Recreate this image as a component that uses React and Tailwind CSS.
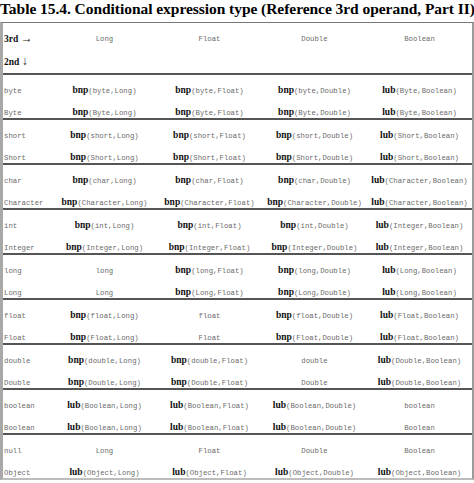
const groups = [
  [
    ["byte", "bnp(byte,Long)", "bnp(byte,Float)", "bnp(byte,Double)", "lub(Byte,Boolean)"],
    ["Byte", "bnp(Byte,Long)", "bnp(Byte,Float)", "bnp(Byte,Double)", "lub(Byte,Boolean)"],
  ],
  [
    ["short", "bnp(short,Long)", "bnp(short,Float)", "bnp(short,Double)", "lub(Short,Boolean)"],
    ["Short", "bnp(Short,Long)", "bnp(Short,Float)", "bnp(Short,Double)", "lub(Short,Boolean)"],
  ],
  [
    ["char", "bnp(char,Long)", "bnp(char,Float)", "bnp(char,Double)", "lub(Character,Boolean)"],
    ["Character", "bnp(Character,Long)", "bnp(Character,Float)", "bnp(Character,Double)", "lub(Character,Boolean)"],
  ],
  [
    ["int", "bnp(int,Long)", "bnp(int,Float)", "bnp(int,Double)", "lub(Integer,Boolean)"],
    ["Integer", "bnp(Integer,Long)", "bnp(Integer,Float)", "bnp(Integer,Double)", "lub(Integer,Boolean)"],
  ],
  [
    ["long", "long", "bnp(long,Float)", "bnp(long,Double)", "lub(Long,Boolean)"],
    ["Long", "Long", "bnp(Long,Float)", "bnp(Long,Double)", "lub(Long,Boolean)"],
  ],
  [
    ["float", "bnp(float,Long)", "float", "bnp(float,Double)", "lub(Float,Boolean)"],
    ["Float", "bnp(Float,Long)", "Float", "bnp(Float,Double)", "lub(Float,Boolean)"],
  ],
  [
    ["double", "bnp(double,Long)", "bnp(double,Float)", "double", "lub(Double,Boolean)"],
    ["Double", "bnp(Double,Long)", "bnp(Double,Float)", "Double", "lub(Double,Boolean)"],
  ],
  [
    ["boolean", "lub(Boolean,Long)", "lub(Boolean,Float)", "lub(Boolean,Double)", "boolean"],
    ["Boolean", "lub(Boolean,Long)", "lub(Boolean,Float)", "lub(Boolean,Double)", "Boolean"],
  ],
  [
    ["null", "Long", "Float", "Double", "Boolean"],
    ["Object", "lub(Object,Long)", "lub(Object,Float)", "lub(Object,Double)", "lub(Object,Boolean)"],
  ],
];

const mono = "font-['Liberation_Mono',monospace] text-[7.3px] text-[#6b6b6b]";
const serif = "font-['Liberation_Serif',serif] font-bold text-[9.5px] text-[#111]";

function Cell({ text }) {
  const m = text.match(/^(bnp|lub)\((.*)\)$/);
  if (!m) return <span className={mono}>{text}</span>;
  return (
    <span className="whitespace-nowrap">
      <span className={serif}>{m[1]}</span>
      <span className={mono}>({m[2]})</span>
    </span>
  );
}

function Row({ cells }) {
  return (
    <div className="grid h-[21.5px] grid-cols-[49px_105px_105px_105px_105px] items-center">
      <div className="pl-[1px]">
        <span className={mono}>{cells[0]}</span>
      </div>
      {cells.slice(1).map((c, i) => (
        <div key={i} className="text-center">
          <Cell text={c} />
        </div>
      ))}
    </div>
  );
}

export default function App() {
  return (
    <div className="h-[483px] w-[474px] overflow-hidden bg-white">
      <h1 className="h-[22px] whitespace-nowrap font-['Liberation_Serif',serif] text-[15.5px] font-bold leading-[18px] tracking-[-0.05px] text-black">
        Table 15.4. Conditional expression type (Reference 3rd operand, Part II)
      </h1>
      <div className="border-b-2 border-l-[3px] border-r-2 border-t-[1.5px] border-b-[#bdbdbd] border-l-[#a8a8a8] border-r-[#9a9a9a] border-t-[#777]">
        <div className="border-b-2 border-[#555]">
          <div className="grid h-[25px] grid-cols-[49px_105px_105px_105px_105px] items-center">
            <div className="pl-[1px]">
              <span className={serif}>
                3rd <span className="text-[12px] font-normal">→</span>
              </span>
            </div>
            {["Long", "Float", "Double", "Boolean"].map((h) => (
              <div key={h} className="-mt-[2px] text-center">
                <span className={mono}>{h}</span>
              </div>
            ))}
          </div>
          <div className="flex h-[25px] items-center pl-[1px]">
            <span className={serif}>
              2nd <span className="text-[12px] font-normal">↓</span>
            </span>
          </div>
        </div>
        {groups.map((g, i) => (
          <div key={i} className={i < groups.length - 1 ? "border-b-2 border-[#555]" : ""}>
            {g.map((r, j) => (
              <Row key={j} cells={r} />
            ))}
          </div>
        ))}
      </div>
    </div>
  );
}
